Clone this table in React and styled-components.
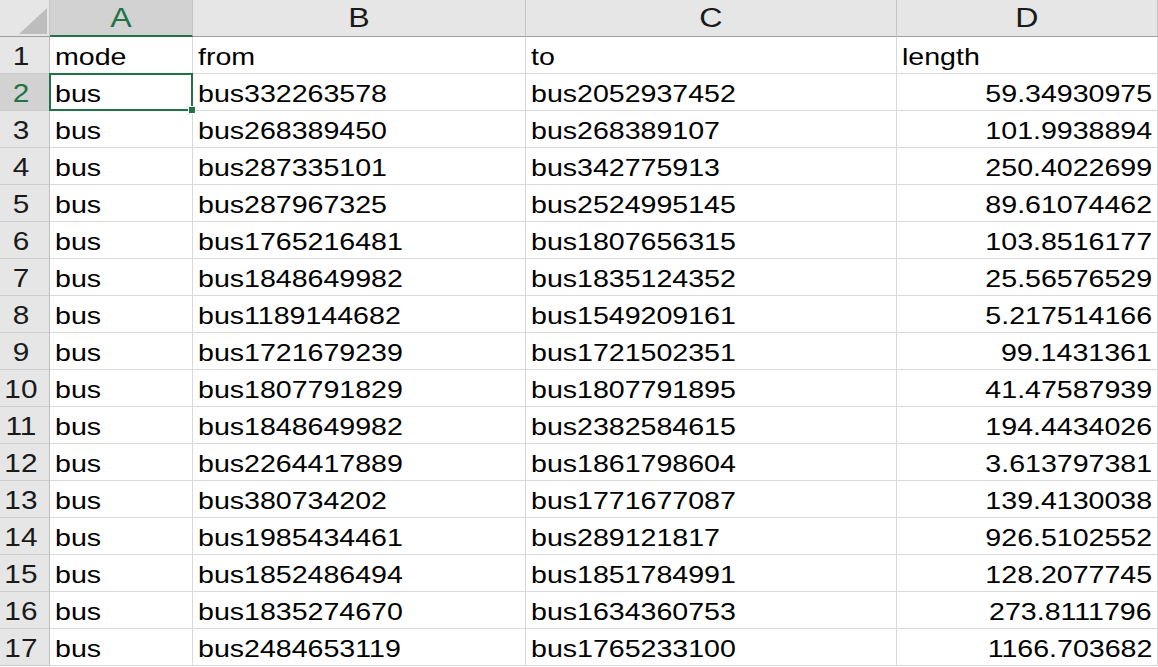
import React from "react";
import styled, { createGlobalStyle, css } from "styled-components";

const GREEN = "#217346";

const Global = createGlobalStyle`
  html, body { margin: 0; padding: 0; background: #ffffff; overflow: hidden; }
  body { font-family: "Liberation Sans", Arial, sans-serif; }
`;

const Sheet = styled.div`
  display: grid;
  grid-template-columns: 50px 143px 333px 371px 261px;
  grid-auto-rows: 37px;
  width: 1158px;
  height: 667px;
  overflow: hidden;
  background: #ffffff;
  font-family: "Liberation Sans", Arial, sans-serif;
`;

const Corner = styled.div`
  box-sizing: border-box;
  background: #e6e6e6;
  border-right: 1px solid #c4c4c4;
  border-bottom: 1px solid #9e9e9e;
  display: flex;
  align-items: flex-end;
  justify-content: flex-end;
  padding: 0 2px 2px 0;
`;

const Triangle = styled.div`
  width: 28px;
  height: 26px;
  background: #bdbdbd;
  clip-path: polygon(100% 0, 100% 100%, 0 100%);
`;

const ColHeader = styled.div`
  box-sizing: border-box;
  background: ${(p) => (p.$active ? "#d2d2d2" : "#e6e6e6")};
  border-right: 1px solid #c4c4c4;
  border-bottom: ${(p) => (p.$active ? `2px solid ${GREEN}` : "1px solid #9e9e9e")};
  color: ${(p) => (p.$active ? GREEN : "#1a1a1a")};
  display: flex;
  align-items: center;
  justify-content: center;
  font-size: 27px;
  padding-top: ${(p) => (p.$active ? "2px" : "1px")};
`;

const RowHeader = styled.div`
  box-sizing: border-box;
  background: ${(p) => (p.$active ? "#d2d2d2" : "#e6e6e6")};
  border-right: 1px solid #bdbdbd;
  border-bottom: 1px solid #cdcdcd;
  color: ${(p) => (p.$active ? GREEN : "#1a1a1a")};
  display: flex;
  align-items: flex-end;
  justify-content: center;
  padding: 0 7px 2px 0;
  font-size: 25px;
`;

const Stretch = styled.span`
  display: inline-block;
  white-space: nowrap;
  transform: scaleX(1.19);
  transform-origin: ${(p) => (p.$align === "right" ? "right" : p.$align === "center" ? "center" : "left")} center;
`;

const Cell = styled.div`
  box-sizing: border-box;
  position: relative;
  border-right: 1px solid #d9d9d9;
  border-bottom: 1px solid #d9d9d9;
  color: #000000;
  font-size: 24px;
  display: flex;
  align-items: flex-end;
  justify-content: ${(p) => (p.$numeric ? "flex-end" : "flex-start")};
  padding: 0 ${(p) => (p.$numeric ? "5px" : "0")} 2px ${(p) => (p.$numeric ? "0" : "5px")};
  ${(p) =>
    p.$selected &&
    css`
      &::after {
        content: "";
        position: absolute;
        left: -1px;
        top: -1px;
        right: -1px;
        bottom: -1px;
        border: 2px solid ${GREEN};
        pointer-events: none;
      }
      &::before {
        content: "";
        position: absolute;
        right: -4px;
        bottom: -4px;
        width: 6px;
        height: 6px;
        background: ${GREEN};
        border: 1px solid #ffffff;
        z-index: 2;
      }
    `}
`;

const header = ["mode", "from", "to", "length"];
const data = [
  ["bus", "bus332263578", "bus2052937452", "59.34930975"],
  ["bus", "bus268389450", "bus268389107", "101.9938894"],
  ["bus", "bus287335101", "bus342775913", "250.4022699"],
  ["bus", "bus287967325", "bus2524995145", "89.61074462"],
  ["bus", "bus1765216481", "bus1807656315", "103.8516177"],
  ["bus", "bus1848649982", "bus1835124352", "25.56576529"],
  ["bus", "bus1189144682", "bus1549209161", "5.217514166"],
  ["bus", "bus1721679239", "bus1721502351", "99.1431361"],
  ["bus", "bus1807791829", "bus1807791895", "41.47587939"],
  ["bus", "bus1848649982", "bus2382584615", "194.4434026"],
  ["bus", "bus2264417889", "bus1861798604", "3.613797381"],
  ["bus", "bus380734202", "bus1771677087", "139.4130038"],
  ["bus", "bus1985434461", "bus289121817", "926.5102552"],
  ["bus", "bus1852486494", "bus1851784991", "128.2077745"],
  ["bus", "bus1835274670", "bus1634360753", "273.8111796"],
  ["bus", "bus2484653119", "bus1765233100", "1166.703682"],
];

const columns = ["A", "B", "C", "D"];

export default function App() {
  const rows = [header, ...data];
  return (
    <>
      <Global />
      <Sheet>
        <Corner>
          <Triangle />
        </Corner>
        {columns.map((c) => (
          <ColHeader key={c} $active={c === "A"}>
            <Stretch $align="center">{c}</Stretch>
          </ColHeader>
        ))}
        {rows.map((row, ri) => (
          <React.Fragment key={ri}>
            <RowHeader $active={ri === 1}>
              <Stretch $align="center">{ri + 1}</Stretch>
            </RowHeader>
            {row.map((v, ci) => {
              const numeric = ri > 0 && ci === 3;
              return (
                <Cell key={ci} $numeric={numeric} $selected={ri === 1 && ci === 0}>
                  <Stretch $align={numeric ? "right" : "left"}>{v}</Stretch>
                </Cell>
              );
            })}
          </React.Fragment>
        ))}
      </Sheet>
    </>
  );
}
